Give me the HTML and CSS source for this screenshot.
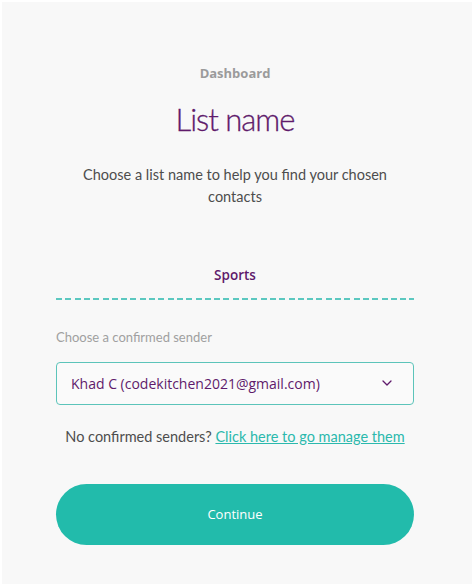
FILE: index.html
```html
<!DOCTYPE html>
<html>
<head>
<meta charset="utf-8">
<link rel="stylesheet" href="styles.css">
</head>
<body>
<main class="page">
  <div class="crumb">Dashboard</div>
  <h1 class="title">List name</h1>
  <p class="intro">Choose a list name to help you find your chosen contacts</p>
  <div class="name-field">
    <div class="name-value">Sports</div>
    <div class="dash"></div>
  </div>
  <label class="label">Choose a confirmed sender</label>
  <div class="select">
    <span class="select-text">Khad C (codekitchen2021@gmail.com)</span>
    <svg class="chev" width="10" height="6" viewBox="0 0 10 6"><path d="M1 1l4 4 4-4" fill="none" stroke="#5f1a6b" stroke-width="1.3" stroke-linecap="round" stroke-linejoin="round"/></svg>
  </div>
  <p class="help">No confirmed senders? <a href="#" class="link">Click here to go manage them</a></p>
  <button class="btn">Continue</button>
</main>
</body>
</html>
```

FILE: styles.css
```css
html, body {
  margin: 0;
  padding: 0;
  background: #ffffff;
}
body {
  padding: 2px;
  box-sizing: border-box;
  height: 586px;
}
.page {
  background: #f8f8f8;
  height: 582px;
  box-sizing: border-box;
  padding: 62px 58px 0 54px;
  display: flex;
  flex-direction: column;
  align-items: stretch;
  font-family: "Lato", "Open Sans", sans-serif;
}
.crumb {
  text-align: center;
  font-family: "Open Sans", sans-serif;
  font-weight: 700;
  font-size: 13px;
  line-height: 18px;
  color: #9b9b9b;
}
.title {
  margin: 17px 0 0 0;
  text-align: center;
  font-family: "Lato", sans-serif;
  font-weight: 300;
  font-size: 31px;
  letter-spacing: -1px;
  line-height: 40px;
  color: #5f1a6b;
  -webkit-text-stroke: 0.3px #5f1a6b;
}
.intro {
  margin: 25px auto 0 auto;
  width: 320px;
  text-align: center;
  font-size: 14.5px;
  line-height: 22px;
  color: #4d4d4d;
}
.name-field {
  margin-top: 57px;
}
.name-value {
  text-align: center;
  font-family: "Open Sans", sans-serif;
  font-weight: 600;
  font-size: 13.5px;
  line-height: 20px;
  color: #5f1a6b;
}
.dash {
  margin-top: 13px;
  height: 1.5px;
  background: repeating-linear-gradient(90deg, #5cc8c0 0 6px, transparent 6px 9.3px);
}
.label {
  margin-top: 28px;
  font-size: 13px;
  line-height: 18px;
  color: #a0a0a0;
}
.select {
  margin-top: 16px;
  height: 43px;
  box-sizing: border-box;
  border: 1.5px solid #5cc4ba;
  border-radius: 4px;
  background: #fafafa;
  display: flex;
  align-items: center;
  justify-content: space-between;
  padding: 0 21px 0 14px;
}
.select-text {
  font-family: "Open Sans", sans-serif;
  font-size: 14px;
  color: #5f1a6b;
}
.chev {
  display: block;
}
.help {
  margin: 22px 0 0 0;
  text-align: center;
  font-size: 14.5px;
  line-height: 20px;
  color: #4d4d4d;
}
.link {
  color: #2bb9ad;
  text-decoration: underline;
}
.btn {
  margin-top: 37px;
  height: 61px;
  border: none;
  border-radius: 31px;
  background: #22bbab;
  color: #ffffff;
  font-family: "Open Sans", sans-serif;
  font-weight: 500;
  font-size: 13px;
}
```
